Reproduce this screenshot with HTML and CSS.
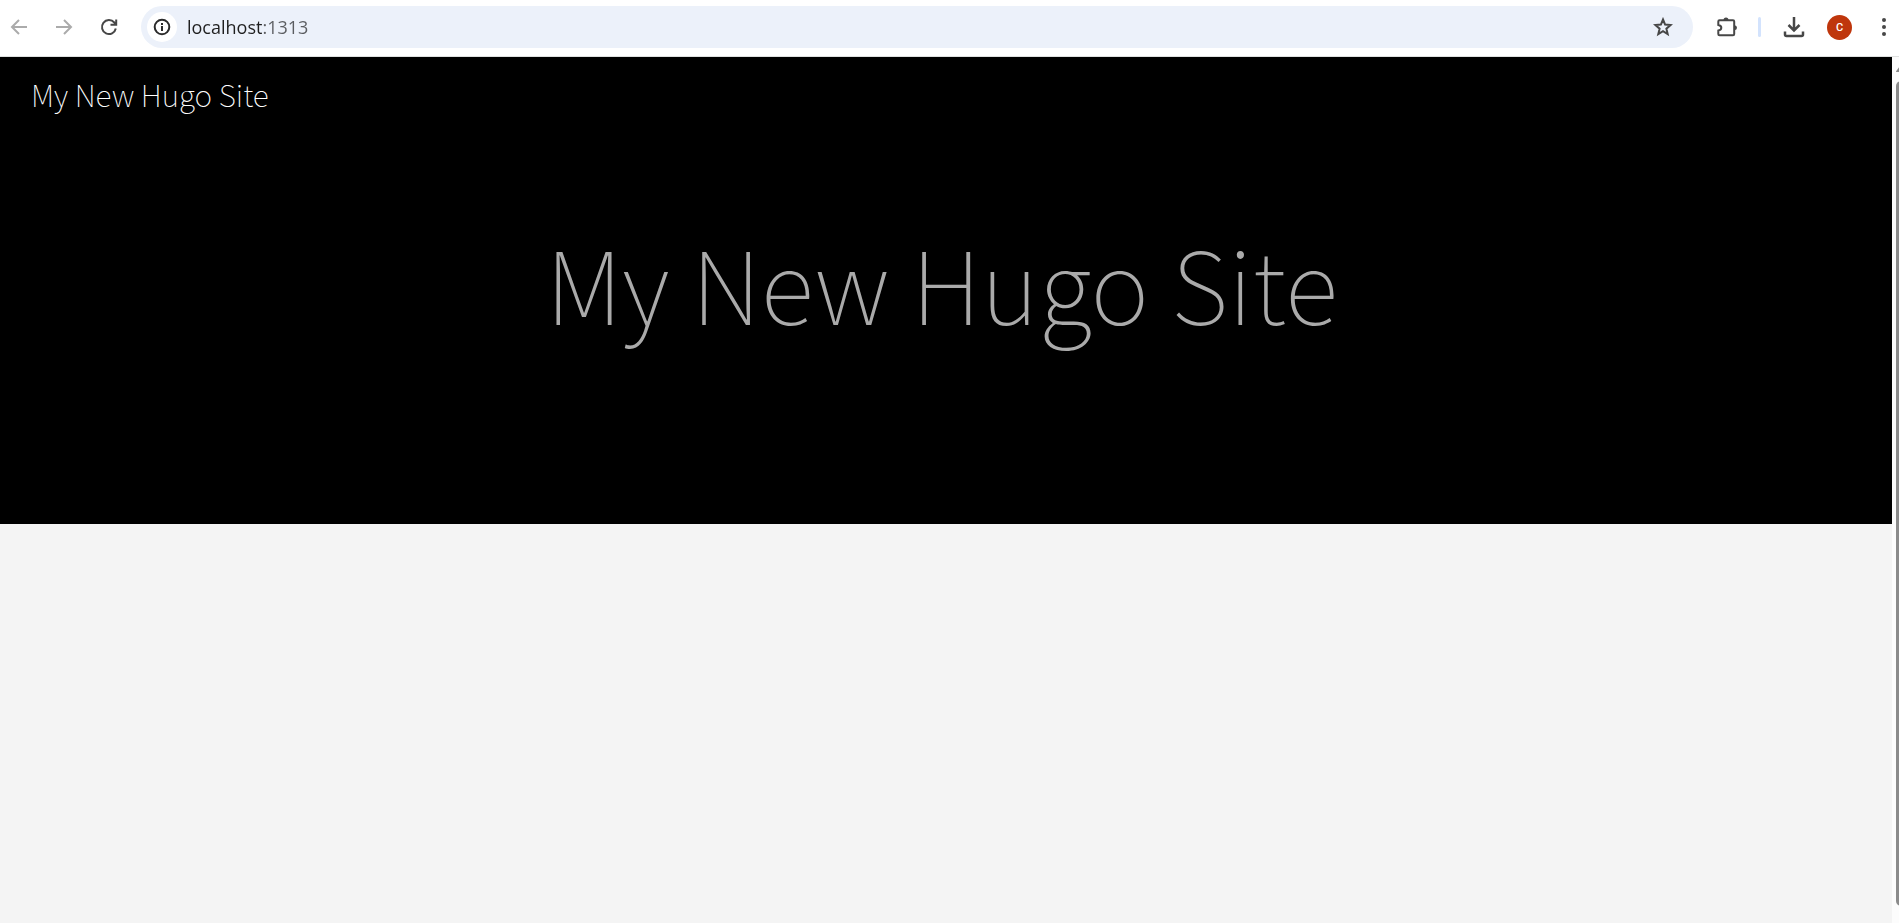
FILE: index.html
```html
<!DOCTYPE html>
<html lang="en">
<head>
  <meta charset="UTF-8">
  <title>My New Hugo Site</title>
  <meta name="viewport" content="width=device-width, initial-scale=1.0">
  <link rel="stylesheet" href="styles.css">
</head>
<body>

<div class="toolbar">
  <div class="nav-buttons">
    <button class="icon-btn muted" type="button" aria-label="Back">
      <svg width="18" height="18" viewBox="0 0 18 18"><path d="M17 9H2.500M9 2L2 9l7 7"/></svg>
    </button>
    <button class="icon-btn muted" type="button" aria-label="Forward">
      <svg width="18" height="18" viewBox="0 0 18 18"><path d="M1 9h14.500M9 2l7 7-7 7"/></svg>
    </button>
    <button class="icon-btn" type="button" aria-label="Reload">
      <svg width="18" height="18" viewBox="0 0 18 18"><path d="M15.800 10.500A7 7 0 1 1 14.300 4.500L16 6.200M16.200 1.500v5.300H10.500"/></svg>
    </button>
  </div>

  <form class="address">
    <button class="site-info" type="button" aria-label="Site information">
      <svg width="18" height="18" viewBox="0 0 18 18"><circle cx="9" cy="9" r="7.300"/><path d="M9 8v5M9 5v2"/></svg>
    </button>
    <input class="url" type="text" value="localhost:1313" aria-label="Address" spellcheck="false">
    <button class="icon-btn star" type="button" aria-label="Bookmark">
      <svg width="20" height="20" viewBox="0 0 20 20"><path d="M10 2.500l2.100 5.100 5.500.500-4.200 3.600 1.300 5.400L10 14.200l-4.700 2.900 1.300-5.400-4.200-3.600 5.500-.500z"/></svg>
    </button>
  </form>

  <div class="tools">
    <button class="icon-btn" type="button" aria-label="Extensions">
      <svg width="22" height="22" viewBox="0 0 22 22"><path d="M3.500 4.200H17q1.200 0 1.200 1.200V18q0 1.200-1.200 1.200H3.500q-1.200 0-1.200-1.200v-3.500q3-.500 3-2.800t-3-2.800V5.400q0-1.200 1.200-1.200z"/><path class="solid" d="M7.500 4a2.500 2.500 0 0 1 5 0zM18.500 9.200a2.500 2.500 0 0 1 0 5z"/></svg>
    </button>
    <span class="divider"></span>
    <button class="icon-btn" type="button" aria-label="Downloads">
      <svg width="22" height="22" viewBox="0 0 22 22"><path stroke-width="2.500" d="M11 1v13.500M5.500 9l5.500 5.500L16.500 9M2 15.500v3q0 1.500 1.500 1.500h15q1.500 0 1.500-1.500v-3"/></svg>
    </button>
    <button class="avatar" type="button" aria-label="Profile">C</button>
    <button class="icon-btn menu" type="button" aria-label="Menu">
      <svg width="6" height="18" viewBox="0 0 6 18"><circle cx="3" cy="2" r="2"/><circle cx="3" cy="9" r="2"/><circle cx="3" cy="16" r="2"/></svg>
    </button>
  </div>
</div>

<div class="viewport">
  <div class="page">
    <header class="hero">
      <nav class="site-nav">
        <a class="site-title" href="#">My New Hugo Site</a>
      </nav>
      <h1 class="headline">My New Hugo Site</h1>
    </header>
    <main class="content"></main>
  </div>
  <div class="scrollbar">
    <svg class="scroll-up" width="10" height="8" viewBox="0 0 10 8"><path d="M0 7q0-1 1-2l3-4q1-1 2 0l3 4q1 1 1 2z"/></svg>
    <div class="thumb"></div>
  </div>
</div>

</body>
</html>
```

FILE: styles.css
```css
* {
  box-sizing: border-box;
}

body {
  margin: 0;
  height: 100vh;
  display: flex;
  flex-direction: column;
  overflow: hidden;
  background: #f4f4f4;
  font-family: "Noto Sans CJK SC", sans-serif;
}

button {
  padding: 0;
  border: none;
  background: none;
  cursor: pointer;
}

svg {
  display: block;
  fill: none;
  stroke: #474747;
  stroke-width: 2;
}

/* browser toolbar */
.toolbar {
  flex: none;
  display: flex;
  align-items: center;
  height: 57px;
  padding: 0 12px 2px 9px;
  background: #fff;
  border-bottom: 1px solid #dfe1e0;
}

.nav-buttons {
  display: flex;
  align-items: center;
  gap: 25px;
  padding-right: 22px;
}

.icon-btn {
  display: flex;
  align-items: center;
  justify-content: center;
  min-width: 20px;
}

.muted svg {
  stroke: #ababab;
}

.address {
  flex: 1;
  display: flex;
  align-items: center;
  height: 42px;
  padding: 0 20px 0 6px;
  border-radius: 21px;
  background: #ecf1fa;
}

.site-info {
  display: flex;
  align-items: center;
  justify-content: center;
  width: 30px;
  height: 30px;
  border-radius: 50%;
  background: #fff;
}

.site-info svg {
  stroke: #2b2b2b;
}

/* host is darker than the port */
.url {
  flex: 1;
  min-width: 0;
  margin-left: 10px;
  padding: 0;
  border: none;
  outline: none;
  font-family: "Open Sans", sans-serif;
  font-size: 18px;
  line-height: 26px;
  color: transparent;
  background: linear-gradient(to right, #1f1f1f 76px, #5a5c60 76px);
  -webkit-background-clip: text;
  background-clip: text;
}

.tools {
  display: flex;
  align-items: center;
  padding-left: 23px;
}

.divider {
  width: 3px;
  height: 20px;
  margin: 0 22px 0 20px;
  border-radius: 2px;
  background: #d3e3fd;
}

.avatar {
  width: 25px;
  height: 25px;
  margin: 0 29px 0 22px;
  border-radius: 50%;
  background: #bf360c;
  color: #fff;
  font: 500 11px Roboto, sans-serif;
}

.menu {
  min-width: 6px;
}

.menu svg {
  fill: #474747;
  stroke: none;
}

.solid {
  fill: #474747;
  stroke: none;
}

/* page */
.viewport {
  flex: 1;
  display: flex;
  min-height: 0;
}

.page {
  flex: 1;
  background: #f4f4f4;
}

.hero {
  padding: 15px 40px 180px 31px;
  background: #000;
}

.site-nav {
  display: flex;
}

.site-title {
  font-size: 30px;
  font-weight: 100;
  line-height: 45px;
  color: #fff;
  text-decoration: none;
}

.headline {
  margin: 102px 0 0;
  font-size: 100px;
  font-weight: 100;
  line-height: 125px;
  text-align: center;
  color: #aaa;
}

/* scrollbar */
.scrollbar {
  width: 7px;
  padding: 8px 0 17px 4px;
  display: flex;
  flex-direction: column;
  gap: 8px;
  overflow: hidden;
  background: #fcfcfc;
}

.scroll-up {
  flex: none;
  fill: #8b8b8b;
  stroke: none;
}

.thumb {
  flex: 1;
  width: 10px;
  border-radius: 5px;
  background: #8b8b8b;
}
```
